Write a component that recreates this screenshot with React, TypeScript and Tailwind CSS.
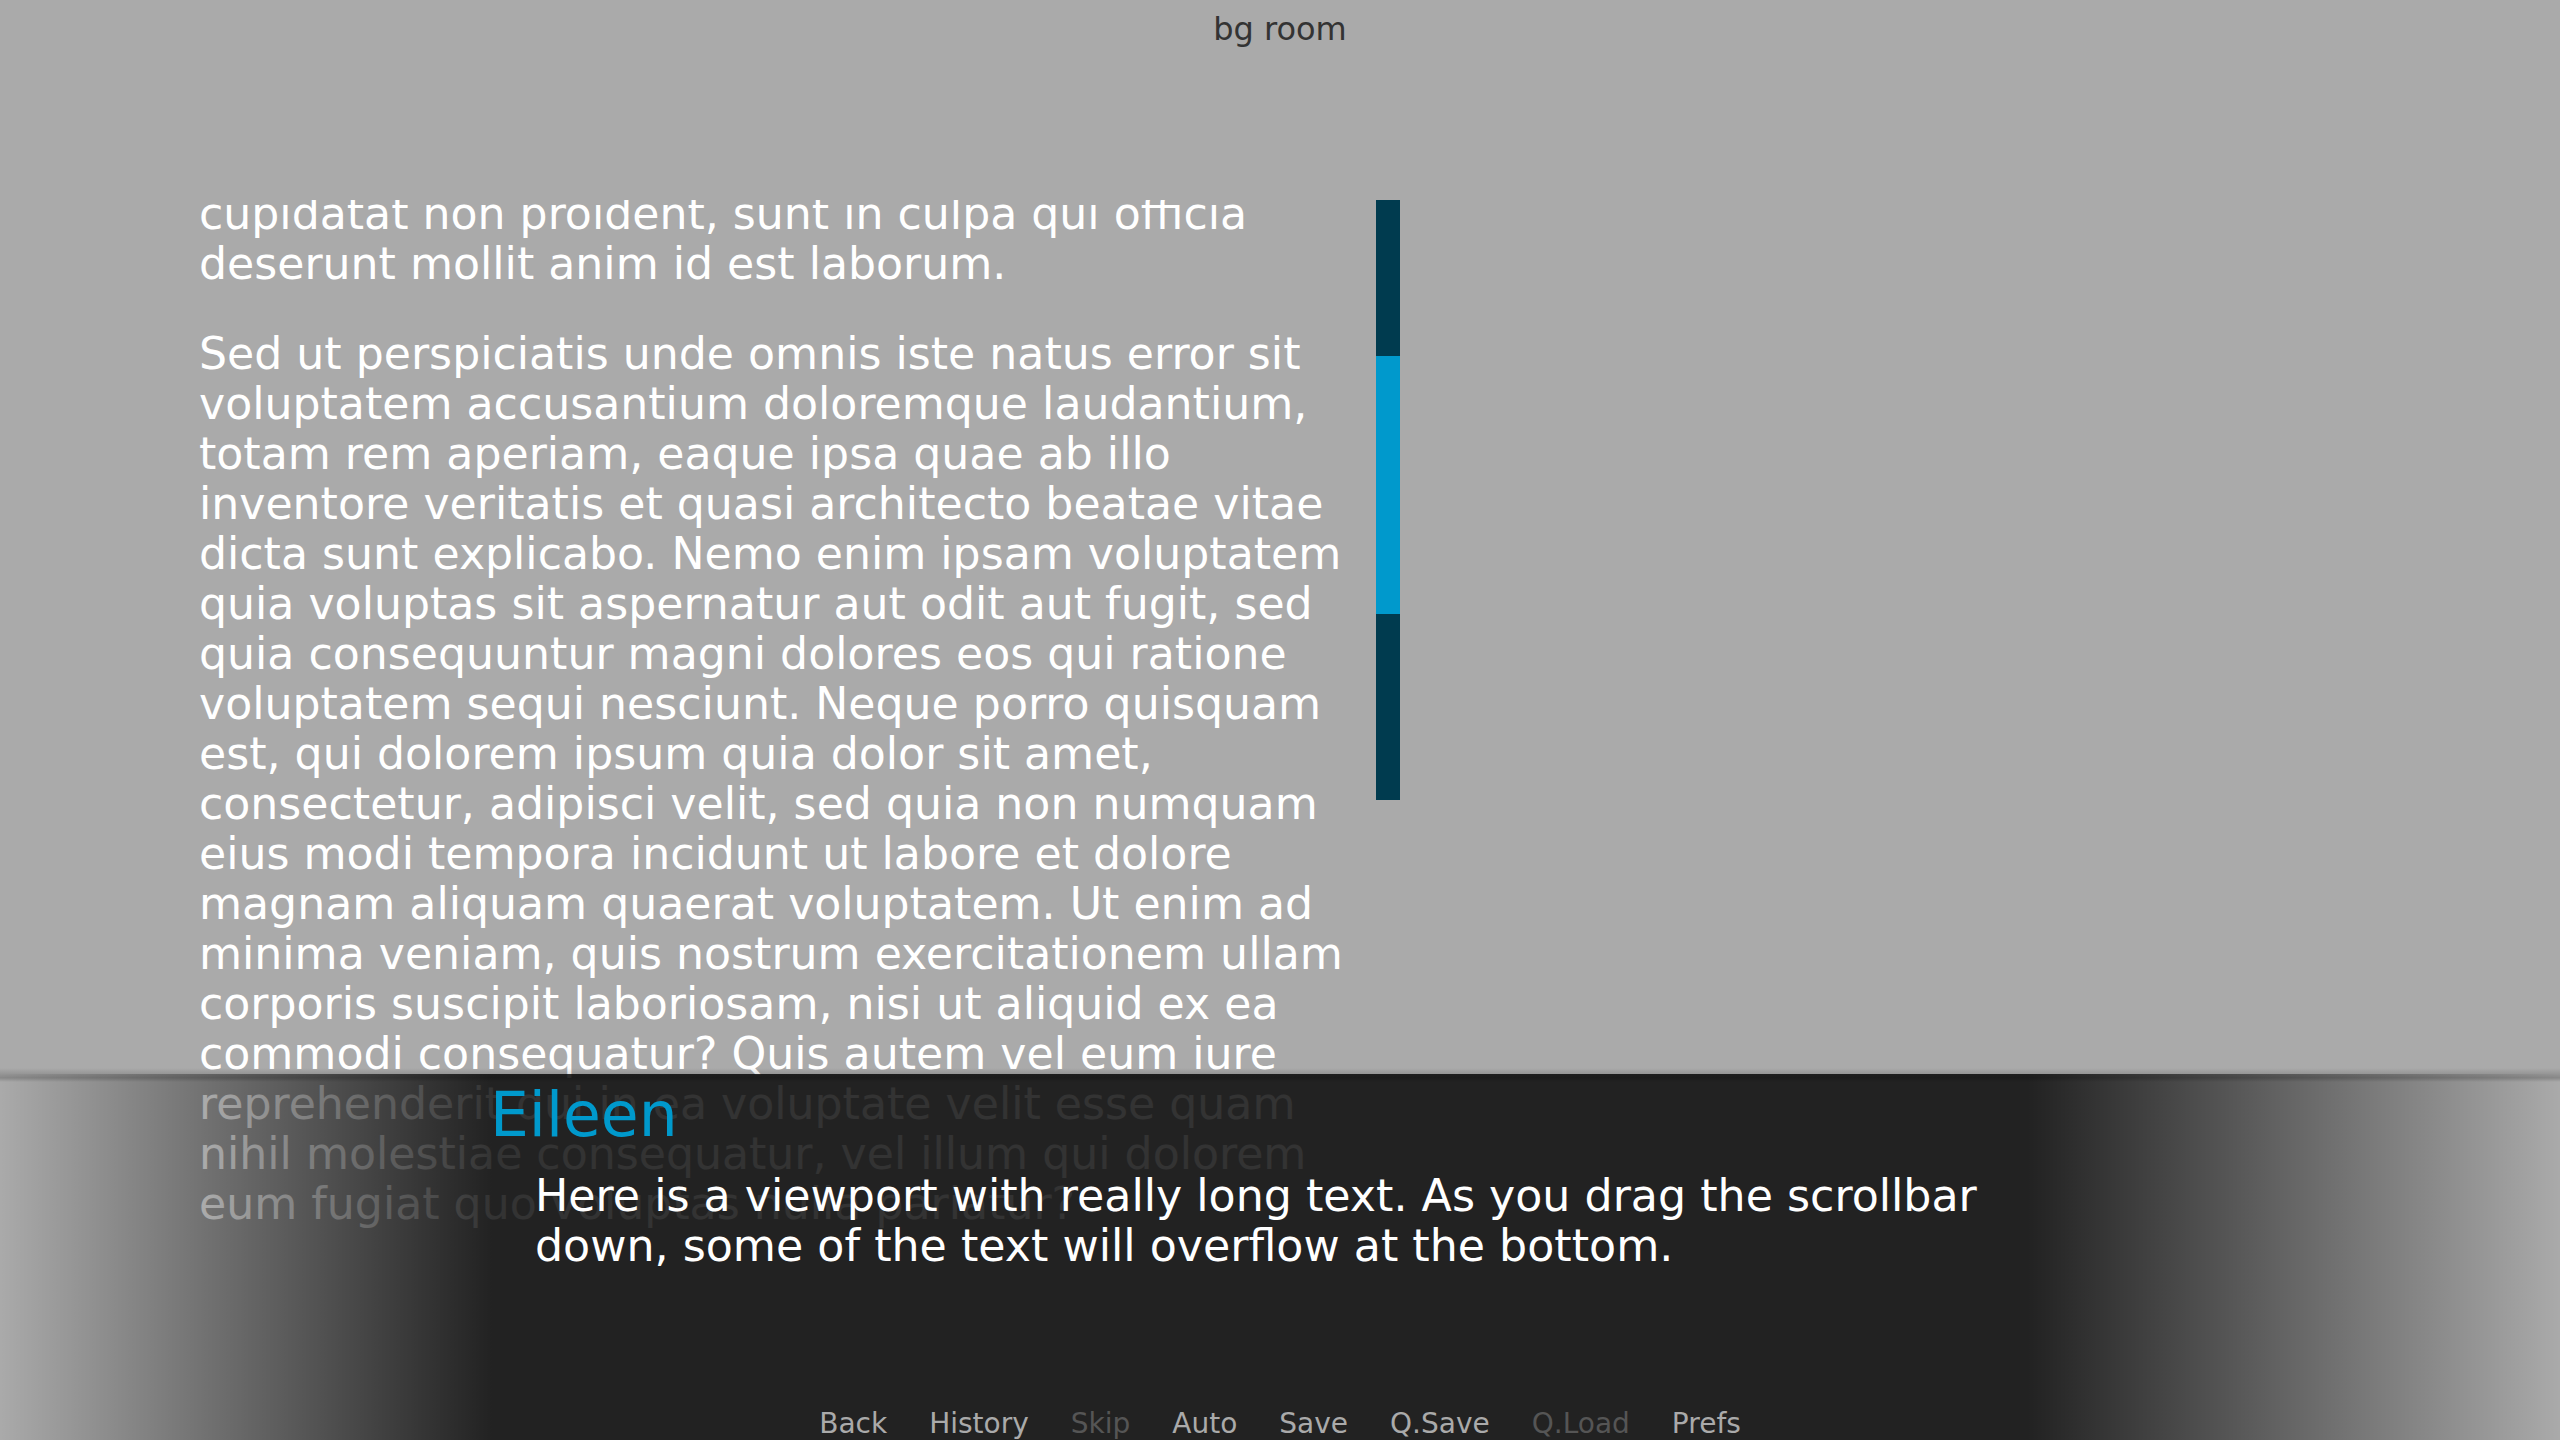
const passage: readonly string[][] = [
  ["cupidatat non proident, sunt in culpa qui officia", "deserunt mollit anim id est laborum."],
  [
    "Sed ut perspiciatis unde omnis iste natus error sit",
    "voluptatem accusantium doloremque laudantium,",
    "totam rem aperiam, eaque ipsa quae ab illo",
    "inventore veritatis et quasi architecto beatae vitae",
    "dicta sunt explicabo. Nemo enim ipsam voluptatem",
    "quia voluptas sit aspernatur aut odit aut fugit, sed",
    "quia consequuntur magni dolores eos qui ratione",
    "voluptatem sequi nesciunt. Neque porro quisquam",
    "est, qui dolorem ipsum quia dolor sit amet,",
    "consectetur, adipisci velit, sed quia non numquam",
    "eius modi tempora incidunt ut labore et dolore",
    "magnam aliquam quaerat voluptatem. Ut enim ad",
    "minima veniam, quis nostrum exercitationem ullam",
    "corporis suscipit laboriosam, nisi ut aliquid ex ea",
    "commodi consequatur? Quis autem vel eum iure",
    "reprehenderit qui in ea voluptate velit esse quam",
    "nihil molestiae consequatur, vel illum qui dolorem",
    "eum fugiat quo voluptas nulla pariatur?"
  ]
];

type QuickButton = { label: string; disabled?: boolean };

const quickMenu: readonly QuickButton[] = [
  { label: "Back" },
  { label: "History" },
  { label: "Skip", disabled: true },
  { label: "Auto" },
  { label: "Save" },
  { label: "Q.Save" },
  { label: "Q.Load", disabled: true },
  { label: "Prefs" }
];

export default function App() {
  return (
    <div className="relative h-[1440px] w-[2560px] overflow-hidden bg-[#aaaaaa] font-['DejaVu_Sans',sans-serif]">
      {/* placeholder background label */}
      <p className="absolute inset-x-0 top-[11px] text-center text-[32px] leading-[37px] text-[#333333]">bg room</p>

      {/* viewport + scrollbar */}
      <div className="flex gap-[17px] pl-[199px] pt-[200px]">
        <div className="h-[1060px] w-[1160px] overflow-hidden text-[44.2px] leading-[50px] text-white">
          <div className="-mt-[11px]">
            {passage.map((para, i) => (
              <div key={i} className={i > 0 ? "mt-[40px]" : ""}>
                {para.map((line) => (
                  <div key={line} className="whitespace-nowrap">
                    {line}
                  </div>
                ))}
              </div>
            ))}
          </div>
        </div>
        <div className="flex h-[600px] w-[24px] flex-col">
          <div className="h-[156px] bg-[#003b4f]" />
          <div className="h-[258px] bg-[#0099cc]" />
          <div className="flex-1 bg-[#003b4f]" />
        </div>
      </div>

      {/* say window */}
      <div className="absolute inset-x-0 bottom-0 flex h-[366px] flex-col bg-[linear-gradient(to_right,rgba(0,0,0,0)_0px,rgba(0,0,0,0.8)_492px,rgba(0,0,0,0.8)_2028px,rgba(0,0,0,0)_2560px)]">
        <div className="pointer-events-none absolute inset-x-0 -top-[6px] h-[14px] bg-[linear-gradient(to_bottom,rgba(0,0,0,0),rgba(0,0,0,0.2)_70%,rgba(0,0,0,0))]" />
        <p className="ml-[490px] mt-[6px] text-[61.5px] leading-[70px] text-[#0099cc]">Eileen</p>
        <p className="ml-[535px] mt-[21px] text-[44.3px] leading-[50px] text-white">
          Here is a viewport with really long text. As you drag the scrollbar
          <br />
          down, some of the text will overflow at the bottom.
        </p>
        <nav className="mt-auto flex justify-center text-[28px] leading-[32px]">
          {quickMenu.map((b) => (
            <span key={b.label} className={`px-[21px] ${b.disabled ? "text-[#555555]" : "text-[#aaaaaa]"}`}>
              {b.label}
            </span>
          ))}
        </nav>
      </div>
    </div>
  );
}
